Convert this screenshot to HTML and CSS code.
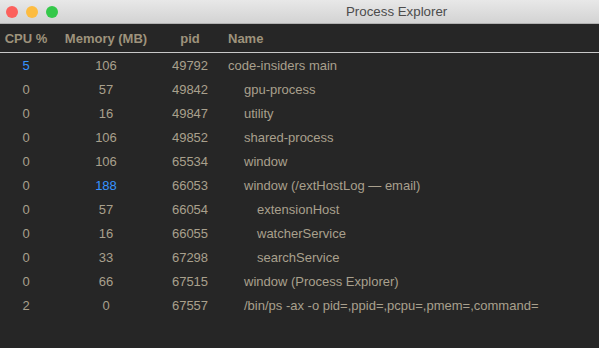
FILE: index.html
```html
<html>
<head>
    <meta charset="utf-8">
    <link rel="stylesheet" href="styles.css">
</head>
<body>
<div class="titlebar">
    <div class="lights">
        <span class="light red"></span>
        <span class="light yellow"></span>
        <span class="light green"></span>
    </div>
    <div class="title">Process Explorer</div>
</div>
<div class="table">
    <div class="row head">
        <div>CPU %</div><div>Memory (MB)</div><div>pid</div><div class="name">Name</div>
    </div>
    <div class="row"><div class="hot">5</div><div>106</div><div>49792</div><div class="name">code-insiders main</div></div>
    <div class="row"><div>0</div><div>57</div><div>49842</div><div class="name l1">gpu-process</div></div>
    <div class="row"><div>0</div><div>16</div><div>49847</div><div class="name l1">utility</div></div>
    <div class="row"><div>0</div><div>106</div><div>49852</div><div class="name l1">shared-process</div></div>
    <div class="row"><div>0</div><div>106</div><div>65534</div><div class="name l1">window</div></div>
    <div class="row"><div>0</div><div class="hot">188</div><div>66053</div><div class="name l1">window (/extHostLog — email)</div></div>
    <div class="row"><div>0</div><div>57</div><div>66054</div><div class="name l2">extensionHost</div></div>
    <div class="row"><div>0</div><div>16</div><div>66055</div><div class="name l2">watcherService</div></div>
    <div class="row"><div>0</div><div>33</div><div>67298</div><div class="name l2">searchService</div></div>
    <div class="row"><div>0</div><div>66</div><div>67515</div><div class="name l1">window (Process Explorer)</div></div>
    <div class="row"><div>2</div><div>0</div><div>67557</div><div class="name l1">/bin/ps -ax -o pid=,ppid=,pcpu=,pmem=,command=</div></div>
</div>
</body>
</html>
```

FILE: styles.css
```css
body {
    margin: 0;
    height: 348px;
    overflow: hidden;
    background: #262626;
    font-family: "Liberation Sans", Arial, sans-serif;
    font-size: 13px;
    color: #a9a08d;
}
.titlebar {
    height: 23px;
    border-bottom: 1px solid #b1b1b1;
    background: linear-gradient(#e8e8e8, #d3d3d3);
    display: flex;
    align-items: center;
}
.lights {
    display: flex;
    gap: 8px;
    padding-left: 6px;
    width: 334px;
}
.light {
    width: 12px;
    height: 12px;
    border-radius: 50%;
}
.red { background: #fc605c; }
.yellow { background: #fdbc40; }
.green { background: #34c84a; }
.title {
    color: #4c4c4c;
    font-size: 13.3px;
    padding-left: 6px;
}
.table {
    display: flex;
    flex-direction: column;
}
.row {
    display: grid;
    grid-template-columns: 52px 108px 60px 1fr;
    height: 24px;
    align-items: center;
    text-align: center;
    white-space: nowrap;
}
.row.head {
    height: 28px;
    font-weight: bold;
    color: #9e937c;
    border-bottom: 1px solid #c8c8c8;
}
.name {
    text-align: left;
    padding-left: 8px;
}
.l1 { padding-left: 24px; }
.l2 { padding-left: 37px; }
.hot { color: #3794ff; }
```
